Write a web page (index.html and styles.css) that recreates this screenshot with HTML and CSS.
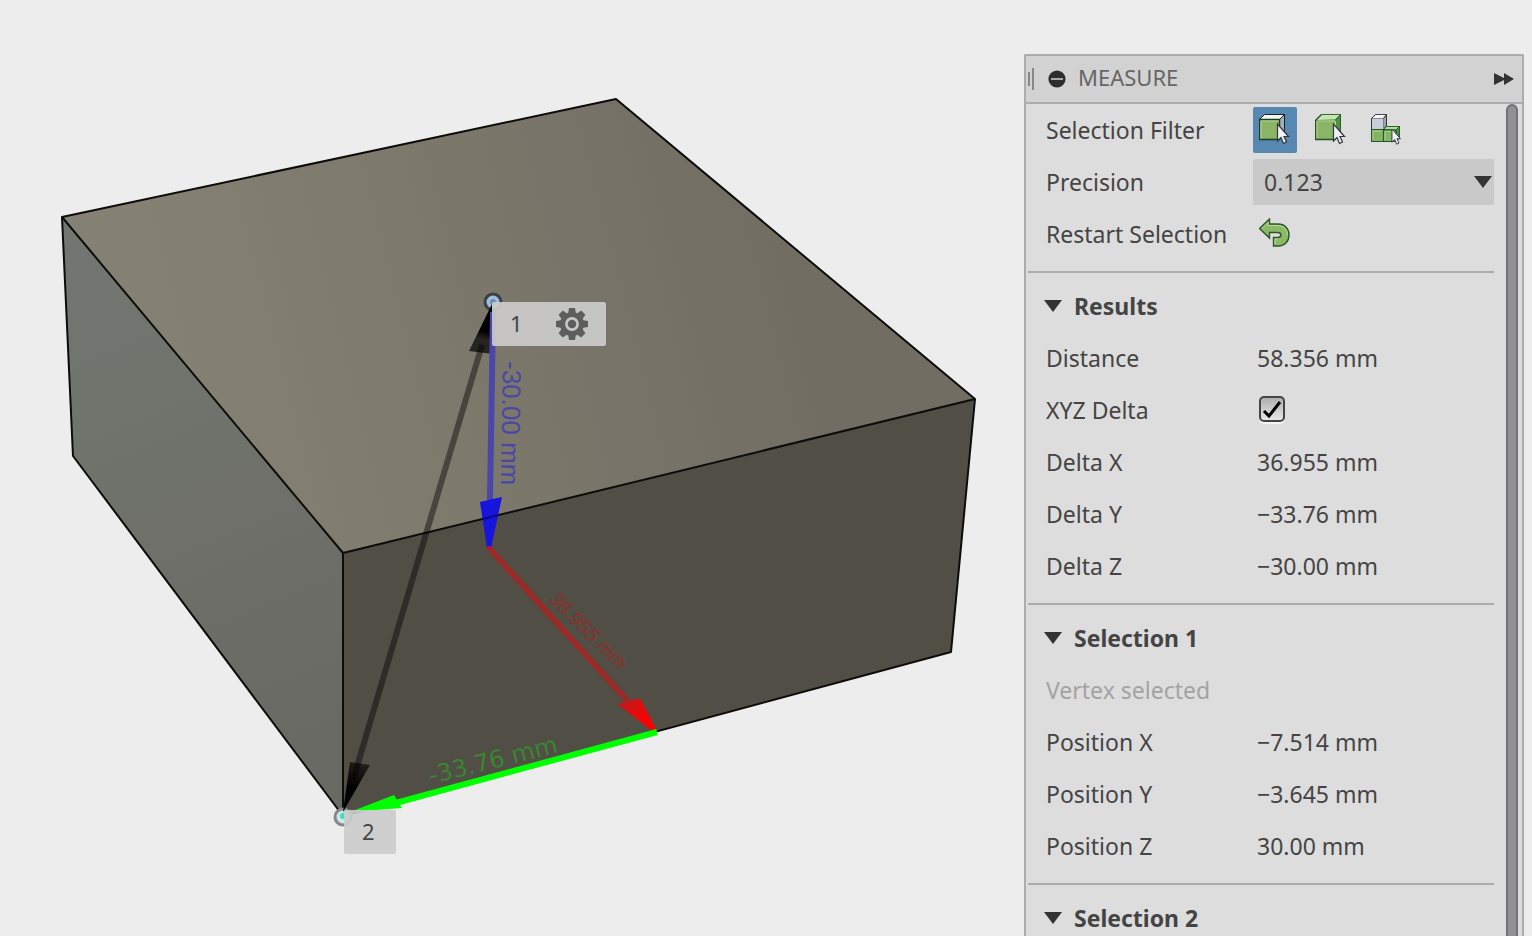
FILE: index.html
```html
<!DOCTYPE html>
<html lang="en">
<head>
    <meta charset="UTF-8">
    <meta name="viewport" content="width=device-width, initial-scale=1.0">
    <title>Measure</title>
    <link rel="stylesheet" href="styles.css">
</head>
<body>

    <main class="canvas">
        <svg class="scene" role="img" aria-label="Measured box">
            <defs>
                <linearGradient id="top-face" gradientUnits="userSpaceOnUse" x1="190" y1="400" x2="790" y2="250">
                    <stop offset="0" stop-color="#848073"/>
                    <stop offset="0.5" stop-color="#7b776b"/>
                    <stop offset="1" stop-color="#716d63"/>
                </linearGradient>
                <linearGradient id="left-face" gradientUnits="userSpaceOnUse" x1="100" y1="260" x2="300" y2="740">
                    <stop offset="0" stop-color="#737670"/>
                    <stop offset="0.6" stop-color="#6e6f69"/>
                    <stop offset="1" stop-color="#6a6a64"/>
                </linearGradient>
                <linearGradient id="head-up" gradientUnits="userSpaceOnUse" x1="490" y1="310" x2="480" y2="352">
                    <stop offset="0.5" stop-color="#000"/>
                    <stop offset="0.7" stop-color="#000" stop-opacity="0.7"/>
                </linearGradient>
                <linearGradient id="head-down" gradientUnits="userSpaceOnUse" x1="346" y1="806" x2="360" y2="763">
                    <stop offset="0.4" stop-color="#000"/>
                    <stop offset="1" stop-color="#000" stop-opacity="0.6"/>
                </linearGradient>
                <linearGradient id="head-red" gradientUnits="userSpaceOnUse" x1="656" y1="731" x2="628" y2="700">
                    <stop offset="0.3" stop-color="#f00"/>
                    <stop offset="1" stop-color="#c21a18"/>
                </linearGradient>
            </defs>

            <!-- box -->
            <polygon points="62,217 616,99 975,399 343,553" fill="url(#top-face)"/>
            <polygon points="62,217 343,553 343,816 73,456" fill="url(#left-face)"/>
            <polygon points="343,553 975,399 951,652 343,816" fill="#514e46"/>
            <path class="edge" d="M62 217L616 99L975 399L951 652L343 816L73 456Z"/>
            <path class="edge" d="M62 217L343 553L975 399M343 553V816"/>

            <!-- end points -->
            <circle cx="493" cy="302" r="8" fill="#9dbdda" stroke="#3c4044" stroke-width="3"/>
            <circle cx="493" cy="302" r="3" fill="#6f8fac"/>
            <circle cx="343" cy="817" r="8" fill="#c9e6ea" stroke="#85878a" stroke-width="3"/>
            <circle cx="343" cy="816" r="3" fill="#3fe0b0"/>

            <!-- distance -->
            <path d="M482 345L353 780" stroke="#000" stroke-opacity="0.43" stroke-width="6"/>
            <polygon points="492,304 469,351 493,354" fill="url(#head-up)"/>
            <polygon points="343,812 350,762 370,765" fill="url(#head-down)"/>

            <!-- delta z -->
            <path d="M493 312L490 500" stroke="#4a47a8" stroke-width="6"/>
            <polygon points="480,502 502,497 491,548 487,548" fill="#1714dc"/>
            <path d="M483 519L498 515" stroke="#0c0a80" stroke-width="2"/>
            <text class="dim dim-z" transform="translate(503 361) rotate(91)">-30.00 mm</text>

            <!-- delta x -->
            <path d="M489 548L632 706" stroke="#992c28" stroke-width="6"/>
            <polygon points="617,704 640,698 657,731 652,731" fill="url(#head-red)"/>
            <circle cx="489" cy="548" r="2" fill="#c01040"/>
            <text class="dim dim-x" transform="translate(548 600) rotate(45)">36.955 mm</text>

            <!-- delta y -->
            <polygon points="350,812 394,795 402,808" fill="#0f0"/>
            <path d="M657 732L392 804" stroke="#0f0" stroke-width="6"/>
            <text class="dim dim-y" transform="translate(431 784) rotate(-14)">-33.76 mm</text>
        </svg>

        <div class="tag tag-first">
            <span>1</span>
            <button class="tag-settings" type="button" aria-label="Settings">
                <svg width="32" height="32" viewBox="-16 -16 32 32">
                    <g fill="#5e5e5e">
                        <circle r="12"/>
                        <path id="tooth" d="M-4 -10L-3 -16H3L4 -10V10L3 16H-3L-4 10Z"/>
                        <use href="#tooth" transform="rotate(45)"/>
                        <use href="#tooth" transform="rotate(90)"/>
                        <use href="#tooth" transform="rotate(135)"/>
                    </g>
                    <circle r="5.6" fill="#5e5e5e" stroke="#c9c8c7" stroke-width="2.6"/>
                </svg>
            </button>
        </div>
        <div class="tag tag-second"><span>2</span></div>
    </main>

    <aside class="panel">
        <header class="panel-header">
            <span class="grip"></span>
            <button class="icon-btn" type="button" aria-label="Collapse">
                <svg width="18" height="18" viewBox="0 0 18 18">
                    <circle cx="9" cy="9" r="8.6" fill="#2d2e2e"/>
                    <path d="M3 9H15" stroke="#a8aaaa" stroke-width="2"/>
                </svg>
            </button>
            <h1 class="panel-title">MEASURE</h1>
            <button class="icon-btn" type="button" aria-label="Dock panel">
                <svg width="20" height="12" viewBox="0 0 20 12">
                    <path d="M0 0L10 5V0L20 6L10 12V7L0 12Z" fill="#333"/>
                </svg>
            </button>
        </header>

        <div class="panel-body">
            <div class="fields">
                <div class="row">
                    <span class="label">Selection Filter</span>
                    <div class="filters">
                        <button class="filter active" type="button" aria-label="Select face, edge or vertex">
                            <svg width="32" height="32" viewBox="0 0 32 32">
                                <path d="M0.5 5.5L5.5 0.5H25.5L20.5 5.5Z" fill="#f4f5f9" stroke="#171f29"/>
                                <path d="M20.5 5.5L25.5 0.5V20L20.5 25.5Z" fill="#a4adbc" stroke="#171f29"/>
                                <path d="M0.5 5.5H20.5V25.5H0.5Z" fill="#8ab566" stroke="#1d3d1d" stroke-width="1.4"/>
                                <path d="M2 24.5V7H19.5" fill="none" stroke="#b2d594"/>
                                <path id="cursor" d="M18.5 10V27L22 23.5L24.5 29.5L27.5 28L25 22.5H29.5Z" fill="#f0f1f6" stroke="#30343c" stroke-width="1.2"/>
                            </svg>
                        </button>
                        <button class="filter" type="button" aria-label="Select body">
                            <svg width="32" height="32" viewBox="0 0 32 32">
                                <path d="M0.5 6.5L6.5 0.5H25.5L20.5 6Z" fill="#c5e6b0" stroke="#356b30"/>
                                <path d="M20.5 6L25.5 0.5V20L20.5 25.5Z" fill="#4f9141" stroke="#27602a"/>
                                <path d="M0.5 6.5H20.5V25.5H0.5Z" fill="#8ab566"/>
                                <path d="M6.5 0.5L0.5 6.5V25.5H20" fill="none" stroke="#27502a" stroke-width="1.4"/>
                                <path d="M2 24V7H20.5V24" fill="none" stroke="#acd38f"/>
                                <use href="#cursor"/>
                            </svg>
                        </button>
                        <button class="filter" type="button" aria-label="Select component">
                            <svg width="32" height="32" viewBox="0 0 32 32">
                                <path d="M0.5 4.5L4.5 0.5H15.5L12.5 4.5Z" fill="#f6f7fb" stroke="#454850"/>
                                <path d="M12.5 4.5L15.5 0.5V12L12.5 15Z" fill="#9ca2b1" stroke="#333840"/>
                                <path d="M0.5 4.5H12.5V15.5H0.5Z" fill="#c8cdda"/>
                                <path d="M4.5 0.5L0.5 4.5V15.5" fill="none" stroke="#333840"/>
                                <path d="M12.5 15.5L15.5 12.5H28.5L25 16Z" fill="#b4de9e" stroke="#285f2b"/>
                                <path d="M25 16L28.5 12.5V24L25 27.5Z" fill="#4c913f" stroke="#285f2b"/>
                                <path d="M0.5 15.5H12.5V27.5H0.5ZM12.5 16H25V27.5H12.5Z" fill="#83b463" stroke="#27562a" stroke-width="1.2"/>
                                <path d="M2 26V17H11M14 26V17.5H24" fill="none" stroke="#a8d38b"/>
                                <use href="#cursor" transform="translate(6.5 7.2) scale(0.78)"/>
                            </svg>
                        </button>
                    </div>
                </div>
                <div class="row">
                    <label class="label" for="precision">Precision</label>
                    <div class="select-box">
                        <select id="precision">
                            <option>0</option>
                            <option>0.1</option>
                            <option>0.12</option>
                            <option selected>0.123</option>
                            <option>0.1234</option>
                        </select>
                        <svg class="caret" width="18" height="12" viewBox="0 0 18 12"><path d="M0 0H18L9 12Z"/></svg>
                    </div>
                </div>
                <div class="row">
                    <label class="label" for="restart">Restart Selection</label>
                    <button class="filter" id="restart" type="button">
                        <svg width="32" height="32" viewBox="0 0 32 32">
                            <path d="M0.5 10.5L10.5 1V6H19C26 6 30 11 30 17C30 23 26 28 19 28H14.5V19.5H18.5C23 19.5 23 14.5 18.5 14.5H10.5V20Z" fill="#8aba66" stroke="#2d552b" stroke-width="1.4"/>
                            <path d="M3 10.5L9 4.5V7.5H19C25 7.5 28.5 12 28.5 17M16 26V21H19" fill="none" stroke="#b5dc9a"/>
                        </svg>
                    </button>
                </div>

                <hr>

                <details open>
                    <summary><svg class="caret" width="18" height="12" viewBox="0 0 18 12"><path d="M0 0H18L9 12Z"/></svg><span class="label">Results</span></summary>
                    <div class="row"><span class="label">Distance</span><span class="value">58.356 mm</span></div>
                    <div class="row">
                        <label class="label" for="xyz">XYZ Delta</label>
                        <span class="check-box">
                            <input type="checkbox" id="xyz" checked>
                            <svg class="tick" width="26" height="26" viewBox="0 0 26 26"><path d="M5 15L10 20L21 6"/></svg>
                        </span>
                    </div>
                    <div class="row"><span class="label">Delta X</span><span class="value">36.955 mm</span></div>
                    <div class="row"><span class="label">Delta Y</span><span class="value">−33.76 mm</span></div>
                    <div class="row"><span class="label">Delta Z</span><span class="value">−30.00 mm</span></div>
                </details>

                <hr>

                <details open>
                    <summary><svg class="caret" width="18" height="12" viewBox="0 0 18 12"><path d="M0 0H18L9 12Z"/></svg><span class="label">Selection 1</span></summary>
                    <div class="row"><span class="label muted">Vertex selected</span></div>
                    <div class="row"><span class="label">Position X</span><span class="value">−7.514 mm</span></div>
                    <div class="row"><span class="label">Position Y</span><span class="value">−3.645 mm</span></div>
                    <div class="row"><span class="label">Position Z</span><span class="value">30.00 mm</span></div>
                </details>

                <hr>

                <details>
                    <summary><svg class="caret" width="18" height="12" viewBox="0 0 18 12"><path d="M0 0H18L9 12Z"/></svg><span class="label">Selection 2</span></summary>
                </details>
            </div>
            <div class="scrollbar"></div>
        </div>
    </aside>

</body>
</html>
```
FILE: styles.css
```css
* {
    box-sizing: border-box;
}

body {
    margin: 0;
    height: 100vh;
    display: flex;
    overflow: hidden;
    background: #ededed;
    color: #444;
    font-family: "Noto Sans", "Open Sans", sans-serif;
    font-size: 23px;
    line-height: 30px;
}

button {
    padding: 0;
    border: none;
    background: none;
    cursor: pointer;
}

svg {
    display: block;
}

/* 3D view */
.canvas {
    position: relative;
    flex: 1;
    min-width: 0;
}

.scene {
    width: 100%;
    height: 100%;
}

.edge {
    fill: none;
    stroke: #0c0c0a;
    stroke-width: 2;
    stroke-linejoin: round;
}

.dim {
    font-family: "Liberation Sans", Arial, sans-serif;
}

.dim-z {
    font-size: 26px;
    fill: #4a47a8;
}

.dim-x {
    font-size: 20px;
    font-style: italic;
    fill: #8a302c;
}

.dim-y {
    font-family: "DejaVu Sans", sans-serif;
    font-size: 24px;
    fill: #398530;
}

.tag {
    position: absolute;
    display: flex;
    align-items: center;
    gap: 30px;
    height: 44px;
    padding: 0 18px;
    border-radius: 2px;
    background: rgba(204, 204, 204, 0.92);
}

.tag span {
    min-width: 16px;
    padding-bottom: 2px;
    font-size: 22px;
}

.tag-first {
    left: 492px;
    top: 302px;
}

.tag-second {
    left: 344px;
    top: 810px;
}

/* Panel */
.panel {
    display: flex;
    flex-direction: column;
    width: 500px;
    margin: 54px 8px 0 0;
    border: 2px solid #acacac;
    border-bottom: none;
    border-radius: 2px 2px 0 0;
    background: #dddddd;
}

.panel-header {
    display: flex;
    flex: none;
    align-items: center;
    height: 48px;
    padding: 0 8px 0 2px;
    border-bottom: 2px solid #acacac;
    background: #d2d2d2;
}

.grip {
    width: 6px;
    height: 22px;
    margin-right: 14px;
    border-right: 2px solid #888;
    background: linear-gradient(#888, #888) left center / 2px 14px no-repeat;
}

.panel-title {
    flex: 1;
    margin: 0 0 0 12px;
    padding-bottom: 4px;
    font-size: 22px;
    font-weight: normal;
    color: #666;
}

.panel-body {
    display: flex;
    flex: 1;
    gap: 12px;
    min-height: 0;
    padding-right: 4px;
}

.fields {
    flex: 1;
    overflow: hidden;
}

.scrollbar {
    width: 12px;
    border: 2px solid #737376;
    border-bottom: none;
    border-radius: 6px 6px 0 0;
    background: #919193;
}

.row {
    display: grid;
    grid-template-columns: 207px 1fr;
    align-items: center;
    height: 52px;
    padding-left: 20px;
}

.label,
.value {
    padding-bottom: 1px;
    white-space: nowrap;
}

.muted {
    color: #a3a3a3;
}

.value {
    padding-left: 4px;
}

.filters {
    display: flex;
    gap: 12px;
}

.filter {
    width: 44px;
    height: 46px;
    padding: 0 6px;
    border-radius: 2px;
}

.filter.active {
    background: #5788b2;
}

.select-box {
    display: grid;
    align-items: center;
}

.select-box > * {
    grid-area: 1 / 1;
}

select {
    appearance: none;
    width: 100%;
    height: 46px;
    padding: 0 11px 1px;
    border: none;
    border-radius: 2px;
    background: #c9c9c9;
    color: inherit;
    font: inherit;
}

.caret {
    fill: #333;
}

.select-box .caret {
    justify-self: end;
    margin-right: 2px;
    pointer-events: none;
}

.check-box {
    display: grid;
    padding: 0 0 2px 6px;
}

.check-box > * {
    grid-area: 1 / 1;
}

input[type="checkbox"] {
    appearance: none;
    width: 26px;
    height: 26px;
    margin: 0;
    border: 2px solid #444;
    border-radius: 5px;
    background: linear-gradient(#b0b0b0, #e6e6e6);
    box-shadow: 0 2px 0 #f4f4f4;
}

.tick {
    fill: none;
    stroke: #000;
    stroke-width: 3;
    pointer-events: none;
    visibility: hidden;
}

input:checked + .tick {
    visibility: visible;
}

hr {
    height: 2px;
    margin: 11px 0 7px 2px;
    border: none;
    background: #acacac;
}

summary {
    display: flex;
    align-items: center;
    gap: 12px;
    height: 52px;
    padding-left: 18px;
    font-weight: bold;
    list-style: none;
    cursor: pointer;
}
```
